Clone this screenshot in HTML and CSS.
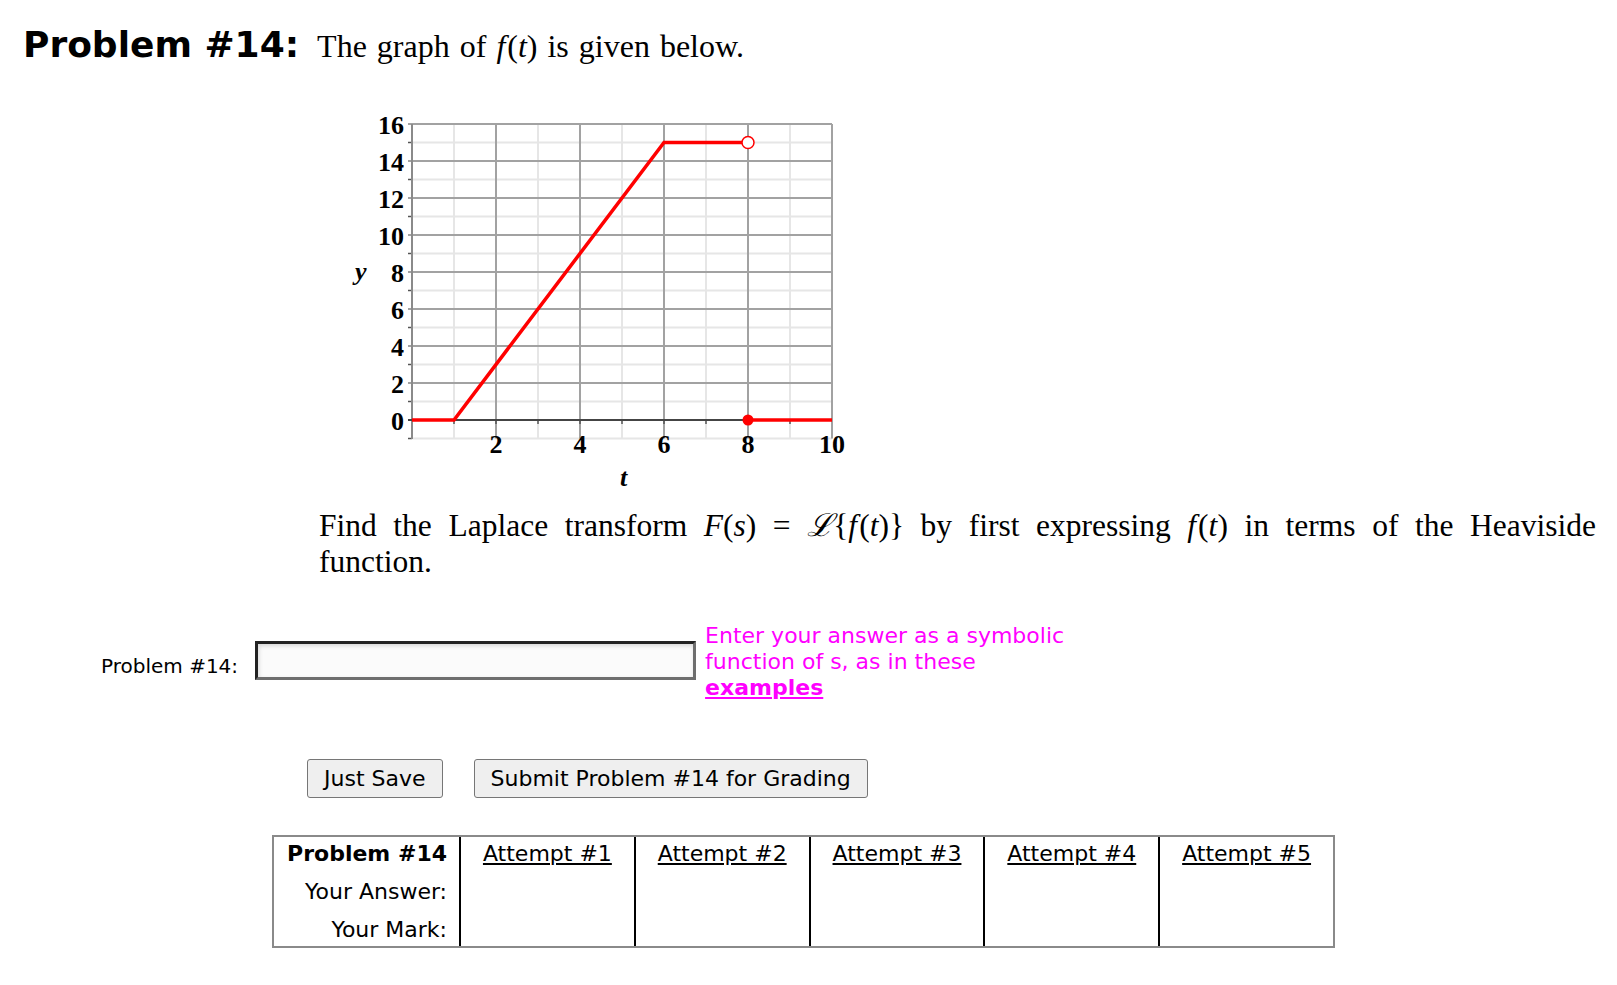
FILE: index.html
```html
<!DOCTYPE html>
<html lang="en">
<head>
<meta charset="utf-8">
<title>Problem #14</title>
<link rel="stylesheet" href="styles.css">
</head>
<body>
<div class="page">
  <h1 class="title"><span class="pnum">Problem #14:</span><span class="stmt">The graph of <i class="fn">f</i>(<i>t</i>) is given below.</span></h1>

  <div class="graph">
    <svg width="530" height="395" viewBox="0 0 530 395" xmlns="http://www.w3.org/2000/svg">
      <g class="minor">
        <line x1="124" y1="24" x2="124" y2="338.5"/>
        <line x1="208" y1="24" x2="208" y2="338.5"/>
        <line x1="292" y1="24" x2="292" y2="338.5"/>
        <line x1="376" y1="24" x2="376" y2="338.5"/>
        <line x1="460" y1="24" x2="460" y2="338.5"/>
        <line x1="82" y1="42.5" x2="502" y2="42.5"/>
        <line x1="82" y1="79.5" x2="502" y2="79.5"/>
        <line x1="82" y1="116.5" x2="502" y2="116.5"/>
        <line x1="82" y1="153.5" x2="502" y2="153.5"/>
        <line x1="82" y1="190.5" x2="502" y2="190.5"/>
        <line x1="82" y1="227.5" x2="502" y2="227.5"/>
        <line x1="82" y1="264.5" x2="502" y2="264.5"/>
        <line x1="82" y1="301.5" x2="502" y2="301.5"/>
        <line x1="82" y1="338.5" x2="502" y2="338.5"/>
      </g>
      <g class="major">
        <line x1="166" y1="24" x2="166" y2="338.5"/>
        <line x1="250" y1="24" x2="250" y2="338.5"/>
        <line x1="334" y1="24" x2="334" y2="338.5"/>
        <line x1="418" y1="24" x2="418" y2="338.5"/>
        <line x1="502" y1="24" x2="502" y2="338.5"/>
        <line x1="78" y1="24" x2="502" y2="24"/>
        <line x1="78" y1="61" x2="502" y2="61"/>
        <line x1="78" y1="98" x2="502" y2="98"/>
        <line x1="78" y1="135" x2="502" y2="135"/>
        <line x1="78" y1="172" x2="502" y2="172"/>
        <line x1="78" y1="209" x2="502" y2="209"/>
        <line x1="78" y1="246" x2="502" y2="246"/>
        <line x1="78" y1="283" x2="502" y2="283"/>
      </g>
      <g class="ticks">
        <line x1="78" y1="42.5" x2="82" y2="42.5"/>
        <line x1="78" y1="79.5" x2="82" y2="79.5"/>
        <line x1="78" y1="116.5" x2="82" y2="116.5"/>
        <line x1="78" y1="153.5" x2="82" y2="153.5"/>
        <line x1="78" y1="190.5" x2="82" y2="190.5"/>
        <line x1="78" y1="227.5" x2="82" y2="227.5"/>
        <line x1="78" y1="264.5" x2="82" y2="264.5"/>
        <line x1="78" y1="301.5" x2="82" y2="301.5"/>
        <line x1="78" y1="338.5" x2="82" y2="338.5"/>
        <line x1="124" y1="320" x2="124" y2="324"/>
        <line x1="166" y1="320" x2="166" y2="324"/>
        <line x1="208" y1="320" x2="208" y2="324"/>
        <line x1="250" y1="320" x2="250" y2="324"/>
        <line x1="292" y1="320" x2="292" y2="324"/>
        <line x1="334" y1="320" x2="334" y2="324"/>
        <line x1="376" y1="320" x2="376" y2="324"/>
        <line x1="418" y1="320" x2="418" y2="324"/>
        <line x1="460" y1="320" x2="460" y2="324"/>
      </g>
      <line class="yaxis" x1="82" y1="24" x2="82" y2="339"/>
      <line class="xaxis" x1="78" y1="320" x2="502" y2="320"/>
      <polyline class="curve" points="82,320 124,320 334,42.5 418,42.5"/>
      <line class="curve" x1="418" y1="320" x2="502" y2="320"/>
      <circle class="open" cx="418" cy="42.5" r="6"/>
      <circle class="dot" cx="418" cy="320" r="5.5"/>
      <g class="ylabels">
        <text x="74" y="34">16</text>
        <text x="74" y="71">14</text>
        <text x="74" y="108">12</text>
        <text x="74" y="145">10</text>
        <text x="74" y="182">8</text>
        <text x="74" y="219">6</text>
        <text x="74" y="256">4</text>
        <text x="74" y="293">2</text>
        <text x="74" y="330">0</text>
      </g>
      <g class="xlabels">
        <text x="166" y="352.5">2</text>
        <text x="250" y="352.5">4</text>
        <text x="334" y="352.5">6</text>
        <text x="418" y="352.5">8</text>
        <text x="502" y="352.5">10</text>
      </g>
      <text class="axlabel" x="25" y="180">y</text>
      <text class="axlabel" x="290" y="386">t</text>
    </svg>
  </div>

  <p class="question"><span class="line1">Find the Laplace transform <i>F</i>(<i>s</i>) = <span class="lap">ℒ</span>{<i class="fn">f</i>(<i>t</i>)} by first expressing <i class="fn">f</i>(<i>t</i>) in terms of the Heaviside</span>function.</p>

  <div class="answer-row">
    <label class="answer-label" for="ans">Problem #14:</label>
    <input class="answer-input" id="ans" type="text">
    <div class="hint">Enter your answer as a symbolic<br>function of s, as in these<br><a href="#">examples</a></div>
  </div>

  <div class="buttons">
    <button class="btn" type="button">Just Save</button>
    <button class="btn" type="button">Submit Problem #14 for Grading</button>
  </div>

  <table class="attempts">
    <tr class="r1">
      <th class="rowhead">Problem #14</th>
      <td class="att"><a href="#">Attempt #1</a></td>
      <td class="att"><a href="#">Attempt #2</a></td>
      <td class="att"><a href="#">Attempt #3</a></td>
      <td class="att"><a href="#">Attempt #4</a></td>
      <td class="att"><a href="#">Attempt #5</a></td>
    </tr>
    <tr class="r2">
      <td class="rowlabel">Your Answer:</td>
      <td class="att"></td><td class="att"></td><td class="att"></td><td class="att"></td><td class="att"></td>
    </tr>
    <tr class="r3">
      <td class="rowlabel">Your Mark:</td>
      <td class="att"></td><td class="att"></td><td class="att"></td><td class="att"></td><td class="att"></td>
    </tr>
  </table>
</div>
</body>
</html>
```

FILE: styles.css
```css
html, body {
  margin: 0;
  padding: 0;
  background: #ffffff;
  color: #000000;
}

.page {
  width: 1617px;
  font-family: "DejaVu Sans", Verdana, sans-serif;
}

.title {
  margin: 25px 0 0 23px;
  font: bold 36px/40px "DejaVu Sans", Verdana, sans-serif;
  white-space: nowrap;
}

.stmt {
  font: normal 32px "Liberation Serif", "Times New Roman", serif;
  word-spacing: 2px;
  margin-left: 18px;
}

.fn {
  margin-right: 2px;
}

.graph {
  margin: 35px 0 0 330px;
  height: 395px;
}

.graph svg {
  display: block;
}

.minor line {
  stroke: #e6e6e6;
  stroke-width: 2;
}

.major line {
  stroke: #a2a2a2;
  stroke-width: 2;
}

.ticks line {
  stroke: #555555;
  stroke-width: 1.5;
}

.yaxis {
  stroke: #8a8a8a;
  stroke-width: 2;
}

.xaxis {
  stroke: #444444;
  stroke-width: 2;
}

.curve {
  fill: none;
  stroke: #ff0000;
  stroke-width: 3.5;
}

.open {
  fill: #ffffff;
  stroke: #ff0000;
  stroke-width: 1.5;
}

.dot {
  fill: #ff0000;
}

.ylabels text {
  font: bold 26px "Liberation Serif", "Times New Roman", serif;
  text-anchor: end;
}

.xlabels text {
  font: bold 26px "Liberation Serif", "Times New Roman", serif;
  text-anchor: middle;
}

.axlabel {
  font: italic bold 26px "Liberation Serif", "Times New Roman", serif;
}

.question {
  margin: 12px 0 0 319px;
  width: 1277px;
  font: 31.5px/36px "Liberation Serif", "Times New Roman", serif;
}

.question .line1 {
  display: block;
  text-align: justify;
  text-align-last: justify;
}

.lap {
  font-family: "DejaVu Serif", serif;
  font-style: italic;
}

.answer-row {
  display: flex;
  align-items: center;
  margin-top: 39px;
}

.answer-label {
  margin-left: 101px;
  font: 20px "DejaVu Sans", Verdana, sans-serif;
  padding-top: 12px;
}

.answer-input {
  margin: 0 0 0 17px;
  width: 441px;
  height: 39px;
  box-sizing: border-box;
  border-style: solid;
  border-width: 3px;
  border-color: #222222 #6e6e6e #6e6e6e #222222;
  background: #fbfbfb;
  box-shadow: inset 1px 2px 4px rgba(0, 0, 0, 0.15);
  padding: 0 4px;
  font: 20px "DejaVu Sans", sans-serif;
}

.hint {
  margin-left: 9px;
  padding-top: 4px;
  color: #ff00ff;
  font: 22px/26px "DejaVu Sans", Verdana, sans-serif;
}

.hint a {
  color: #ff00ff;
  font-weight: bold;
}

.buttons {
  display: flex;
  gap: 31px;
  margin: 58px 0 0 307px;
}

.btn {
  font: 22px/25px "DejaVu Sans", Verdana, sans-serif;
  padding: 6px 16px;
  border: 1px solid #767676;
  border-radius: 3px;
  background: #efefef;
  color: #000000;
}

.attempts {
  margin: 37px 0 0 272px;
  width: 1063px;
  table-layout: fixed;
  border-collapse: separate;
  border-spacing: 0;
  border: 2px solid #8a8a8a;
  font: 22px/26px "DejaVu Sans", Verdana, sans-serif;
}

.attempts th,
.attempts td {
  padding: 6px 12px;
  white-space: nowrap;
}

.r1 th,
.r1 td {
  padding-top: 4px;
}

.r3 td {
  padding-bottom: 3px;
}

.rowhead {
  width: 161px;
  text-align: right;
  font-weight: bold;
}

.rowlabel {
  text-align: right;
}

.att {
  border-left: 2px solid #000000;
  text-align: center;
}

.att a {
  color: #000000;
}
```
